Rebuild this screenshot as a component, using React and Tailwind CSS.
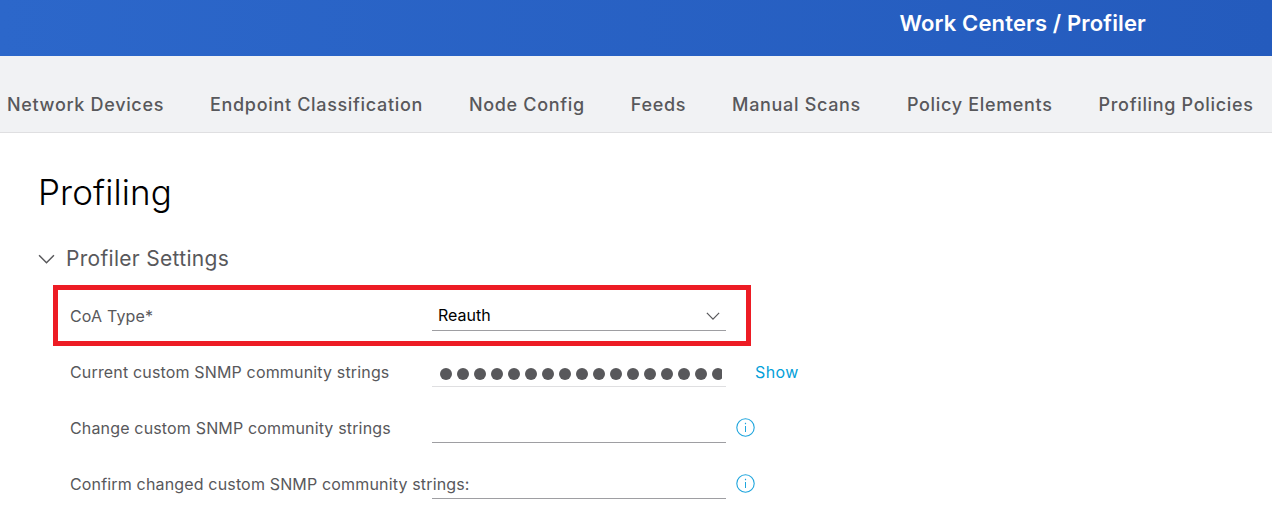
import React from 'react';

const navItems = [
  'Network Devices',
  'Endpoint Classification',
  'Node Config',
  'Feeds',
  'Manual Scans',
  'Policy Elements',
  'Profiling Policies',
];

const Chevron = ({ className }) => (
  <svg className={className} viewBox="0 0 16 9" fill="none" stroke="currentColor" strokeWidth="1.4">
    <path d="M1 1l7 7 7-7" />
  </svg>
);

const InfoIcon = () => (
  <svg className="block w-[19px] h-[19px] text-[#1ea5dd]" viewBox="0 0 19 19" fill="none" stroke="currentColor">
    <circle cx="9.5" cy="9.5" r="8.7" strokeWidth="1.1" />
    <path d="M9.5 8v6" strokeWidth="1" />
    <path d="M9.5 4.8v1.4" strokeWidth="1.2" />
  </svg>
);

const Row = ({ label, children, after }) => (
  <div className="flex items-center h-[56px]">
    <div className="w-[362px] text-[16px] tracking-[0.16px] text-[#58585b] whitespace-nowrap">{label}</div>
    <div className="w-[294px]">{children}</div>
    {after}
  </div>
);

const App = () => (
  <div className="w-[1272px] h-[512px] overflow-hidden bg-white font-['Inter',sans-serif]">
    <header className="h-[56px] bg-gradient-to-r from-[#2c67ca] to-[#245bbd] flex justify-end pr-[126px] pt-[10px]">
      <span className="text-[22px] leading-[27px] font-semibold text-white tracking-[0.15px]">Work Centers / Profiler</span>
    </header>
    <nav className="h-[77px] bg-[#f1f2f4] border-b border-[#dfdfe1] flex items-center gap-[46px] pl-[7px] pt-[21px] whitespace-nowrap">
      {navItems.map((item) => (
        <span key={item} className="text-[18px] font-medium text-[#58585b] tracking-[0.67px]">{item}</span>
      ))}
    </nav>
    <main className="pl-[38px] pt-[37px]">
      <h1 className="text-[35px] leading-[44px] font-light text-black tracking-[0.1px]">Profiling</h1>
      <div className="flex items-center mt-[30px] h-[30px]">
        <Chevron className="w-[17px] h-[10px] text-[#58585b]" />
        <span className="ml-[11px] text-[21px] text-[#58585b] tracking-[0.3px]">Profiler Settings</span>
      </div>
      <div className="ml-[15px] mt-[11px] w-[698px] h-[61px] border-[5px] border-[#ed1c24] pl-[12px] flex items-center">
        <div className="w-[362px] text-[16px] tracking-[0.16px] text-[#58585b]">CoA Type*</div>
        <div className="w-[294px] h-[30px] mt-[1px] border-b border-[#9e9ea2] flex items-center justify-between pl-[6px] pr-[6px]">
          <span className="text-[16px] leading-[24px] text-black -mt-[1px]">Reauth</span>
          <Chevron className="w-[14px] h-[8px] text-[#58585b]" />
        </div>
      </div>
      <div className="ml-[32px] -mt-[2px]">
        <Row
          label="Current custom SNMP community strings"
          after={<a className="ml-[29px] text-[16px] tracking-[0.4px] text-[#049fd9]">Show</a>}
        >
          <div className="h-[30px] border-b border-[#dfdfe1] pl-[8px] pr-[4px] pt-[5px] flex items-center">
            <div className="flex gap-[5px] overflow-hidden">
              {Array.from({ length: 17 }).map((_, i) => (
                <span key={i} className="w-[12px] h-[12px] rounded-full bg-[#58585b] shrink-0" />
              ))}
            </div>
          </div>
        </Row>
        <Row label="Change custom SNMP community strings" after={<span className="ml-[10px] mb-[2px]"><InfoIcon /></span>}>
          <div className="h-[30px] border-b border-[#9e9ea2]" />
        </Row>
        <Row label="Confirm changed custom SNMP community strings:" after={<span className="ml-[10px] mb-[2px]"><InfoIcon /></span>}>
          <div className="h-[30px] border-b border-[#9e9ea2]" />
        </Row>
      </div>
    </main>
  </div>
);

export default App;
